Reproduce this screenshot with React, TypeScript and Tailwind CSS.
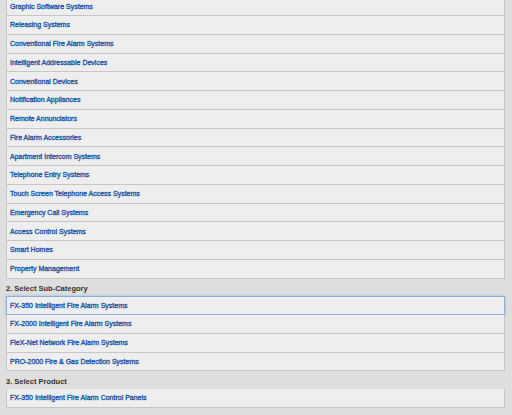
const categories = [
  "Graphic Software Systems",
  "Releasing Systems",
  "Conventional Fire Alarm Systems",
  "Intelligent Addressable Devices",
  "Conventional Devices",
  "Notification Appliances",
  "Remote Annunciators",
  "Fire Alarm Accessories",
  "Apartment Intercom Systems",
  "Telephone Entry Systems",
  "Touch Screen Telephone Access Systems",
  "Emergency Call Systems",
  "Access Control Systems",
  "Smart Homes",
  "Property Management",
];

const subCategories = [
  "FX-350 Intelligent Fire Alarm Systems",
  "FX-2000 Intelligent Fire Alarm Systems",
  "FleX-Net Network Fire Alarm Systems",
  "PRO-2000 Fire & Gas Detection Systems",
];

const products = ["FX-350 Intelligent Fire Alarm Control Panels"];

function Row({ label, selected }: { label: string; selected?: boolean }) {
  return (
    <div
      className={
        selected
          ? "flex h-[19px] items-center border border-[#8aaedb] bg-[#eeeeee] pl-[3px] shadow-[0_0_3px_#9dbde3]"
          : "flex h-[18.75px] items-center border-x border-b border-[#c6c6c6] bg-[#eeeeee] pl-[3px]"
      }
    >
      <span className="text-[7px] leading-none text-[#2457a6] [-webkit-text-stroke:0.35px_#2457a6]">{label}</span>
    </div>
  );
}

function Heading({ children }: { children: string }) {
  return (
    <div className="flex h-[17.5px] items-center pt-[3px]">
      <span className="text-[7.5px] font-bold leading-none text-[#333333]">{children}</span>
    </div>
  );
}

export default function App() {
  return (
    <div className="h-[415px] w-[512px] overflow-hidden bg-[#dedede] font-['Liberation_Sans',Arial,sans-serif]">
      <div className="-mt-[2.75px] pl-[6px] pr-[7px]">
        <div className="flex flex-col">
          {categories.map((c) => (
            <Row key={c} label={c} />
          ))}
        </div>

        <Heading>2. Select Sub-Category</Heading>
        <div className="flex flex-col">
          {subCategories.map((s, i) => (
            <Row key={s} label={s} selected={i === 0} />
          ))}
        </div>

        <Heading>3. Select Product</Heading>
        <div className="flex flex-col">
          {products.map((p) => (
            <Row key={p} label={p} />
          ))}
        </div>
      </div>
    </div>
  );
}
